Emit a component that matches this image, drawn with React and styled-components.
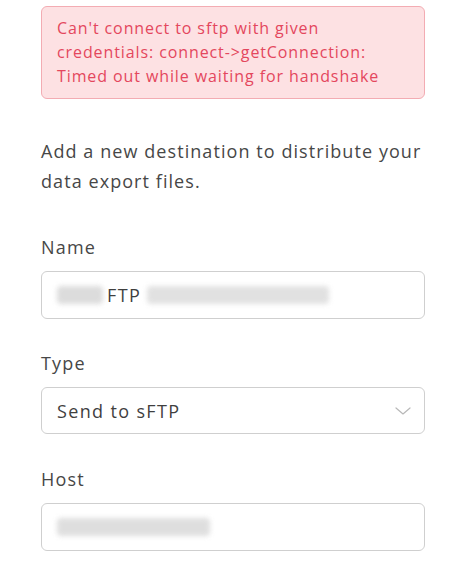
import React from "react";
import styled, { createGlobalStyle } from "styled-components";

const Global = createGlobalStyle`
  html, body { margin: 0; padding: 0; background: #ffffff; }
  body { font-family: "Open Sans", "Liberation Sans", sans-serif; -webkit-font-smoothing: antialiased; }
`;

const Page = styled.div`
  width: 384px;
  padding: 6px 0 0 41px;
  display: flex;
  flex-direction: column;
`;

const ErrorBox = styled.div`
  box-sizing: border-box;
  background: #fde1e3;
  border: 1px solid #f3acb3;
  border-radius: 6px;
  padding: 9px 15px 10px;
  color: #e4475d;
  font-size: 16px;
  line-height: 24px;
  letter-spacing: 0.9px;
  white-space: nowrap;
`;

const Intro = styled.p`
  margin: 37px 0 0;
  color: #474747;
  font-size: 18px;
  line-height: 30px;
  letter-spacing: 1.07px;
  white-space: nowrap;
`;

const Field = styled.div`
  display: flex;
  flex-direction: column;
  margin-top: ${(p) => p.$top}px;
`;

const Label = styled.label`
  color: #474747;
  font-size: 18px;
  line-height: 24px;
  letter-spacing: 1.2px;
  margin-bottom: 12px;
`;

const Box = styled.div`
  box-sizing: border-box;
  height: ${(p) => p.$h}px;
  border: 1px solid #cfcfcf;
  border-radius: 6px;
  display: flex;
  align-items: center;
  padding: 0 13px 0 15px;
  gap: 4px;
  color: #3f3f3f;
  font-size: 18px;
  letter-spacing: 1.35px;
`;

const Blur = styled.span`
  display: inline-block;
  width: ${(p) => p.$w}px;
  height: 18px;
  border-radius: 4px;
  background: ${(p) => p.$bg || "#d4d4d4"};
  filter: blur(2.5px);
  opacity: 0.8;
`;

const Value = styled.span`
  flex: 1;
`;

const Chevron = () => (
  <svg width="16" height="8" viewBox="0 0 16 8" fill="none">
    <path d="M1 1 L8 7 L15 1" stroke="#b8b8b8" strokeWidth="1.2" strokeLinecap="round" strokeLinejoin="round" />
  </svg>
);

export default function App() {
  return (
    <>
      <Global />
      <Page>
        <ErrorBox>
          Can't connect to sftp with given
          <br />
          credentials: connect-&gt;getConnection:
          <br />
          Timed out while waiting for handshake
        </ErrorBox>
        <Intro>
          Add a new destination to distribute your
          <br />
          data export files.
        </Intro>
        <Field $top={39}>
          <Label>Name</Label>
          <Box $h={48}>
            <Blur $w={46} />
            <span>FTP</span>
            <Blur $w={182} $bg="#dadada" style={{ marginLeft: 2 }} />
          </Box>
        </Field>
        <Field $top={32}>
          <Label>Type</Label>
          <Box $h={47}>
            <Value>Send to sFTP</Value>
            <Chevron />
          </Box>
        </Field>
        <Field $top={33}>
          <Label>Host</Label>
          <Box $h={48}>
            <Blur $w={153} $bg="#d7d7d7" />
          </Box>
        </Field>
      </Page>
    </>
  );
}
